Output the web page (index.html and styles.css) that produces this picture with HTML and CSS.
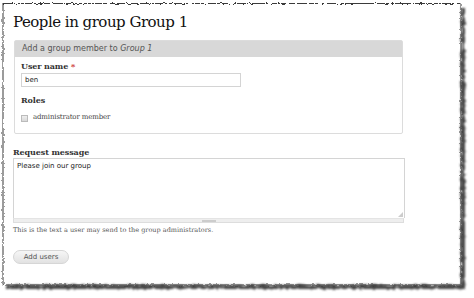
FILE: index.html
```html
<!DOCTYPE html>
<html>
<head>
<meta charset="utf-8">
<link rel="stylesheet" href="styles.css">
</head>
<body>
<div class="page">
  <div class="content">
    <h1 class="title">People in group Group 1</h1>
    <div class="fieldset">
      <div class="legend">Add a group member to <em>Group 1</em></div>
      <div class="fs-body">
        <div class="item">
          <label class="lbl">User name <span class="req">*</span></label>
          <div class="input">ben</div>
        </div>
        <div class="item roles">
          <div class="lbl">Roles</div>
          <div class="check-row"><span class="checkbox"></span><span class="check-label">administrator member</span></div>
        </div>
      </div>
    </div>
    <div class="item msg">
      <label class="lbl">Request message</label>
      <div class="textarea">Please join our group<span class="resize"></span></div>
      <div class="grippie"><span class="grip"></span></div>
      <div class="desc">This is the text a user may send to the group administrators.</div>
    </div>
    <div class="button">Add users</div>
  </div>
  <svg class="frame" viewBox="0 0 474 298" width="474" height="298">
    <defs>
      <filter id="rough" x="-5%" y="-5%" width="110%" height="110%">
        <feTurbulence type="fractalNoise" baseFrequency="0.35" numOctaves="2" seed="4" result="n"/>
        <feDisplacementMap in="SourceGraphic" in2="n" scale="3.5" xChannelSelector="R" yChannelSelector="G"/>
      </filter>
      <filter id="shadow" x="-5%" y="-5%" width="110%" height="110%">
        <feTurbulence type="fractalNoise" baseFrequency="0.3" numOctaves="2" seed="7" result="n"/>
        <feDisplacementMap in="SourceGraphic" in2="n" scale="4" xChannelSelector="R" yChannelSelector="G" result="d"/>
        <feGaussianBlur in="d" stdDeviation="1"/>
      </filter>
    </defs>
    <path d="M6 287 H463 V8" fill="none" stroke="#444" stroke-width="4" filter="url(#shadow)"/>
    <rect x="3" y="3.5" width="458" height="281.5" fill="none" stroke="#3a3a3a" stroke-width="1" filter="url(#rough)"/>
  </svg>
</div>
</body>
</html>
```

FILE: styles.css
```css
html, body {
  margin: 0;
  padding: 0;
  background: #fff;
}
.page {
  position: relative;
  width: 474px;
  height: 298px;
  overflow: hidden;
}
.frame {
  position: absolute;
  left: 0;
  top: 0;
  pointer-events: none;
}
.content {
  padding: 10px 0 0 13px;
  width: 391px;
  font-family: "DejaVu Serif", serif;
  color: #333;
}
.title {
  margin: 0;
  font-family: "DejaVu Serif", serif;
  font-weight: normal;
  font-size: 15px;
  line-height: 24px;
  color: #111;
  letter-spacing: -0.5px;
}
.fieldset {
  margin: 6px 0 0 1px;
  width: 387px;
  border: 1px solid #dcdcdc;
  border-radius: 2px;
}
.legend {
  height: 16px;
  line-height: 16px;
  background: #d8d8d8;
  padding-left: 7px;
  font-family: "DejaVu Sans", sans-serif;
  font-size: 8px;
  color: #555;
}
.fs-body {
  padding: 3px 6px 11px 6px;
}
.lbl {
  display: block;
  font-family: "DejaVu Serif", serif;
  font-weight: bold;
  font-size: 8px;
  letter-spacing: -0.1px;
  line-height: 12px;
  color: #333;
}
.req {
  color: #c33;
}
.input {
  margin-top: 1px;
  width: 215px;
  height: 12px;
  border: 1px solid #d4d4d4;
  padding-left: 3px;
  font-family: "DejaVu Sans", sans-serif;
  font-size: 7px;
  line-height: 12px;
  color: #222;
}
.roles {
  margin-top: 7px;
}
.check-row {
  display: flex;
  align-items: center;
  gap: 5px;
  height: 10px;
  margin-top: 6px;
}
.checkbox {
  width: 5px;
  height: 5px;
  border: 1px solid #bbb;
  background: linear-gradient(#eee, #d8d8d8);
  margin-top: 2px;
}
.check-label {
  font-family: "DejaVu Serif", serif;
  font-size: 7px;
  letter-spacing: -0.15px;
  color: #444;
}
.msg {
  margin-top: 12px;
}
.textarea {
  position: relative;
  width: 385px;
  height: 56px;
  border: 1px solid #d4d4d4;
  border-bottom: none;
  padding: 3px 2px 0 3px;
  font-family: "DejaVu Sans", sans-serif;
  font-size: 7px;
  line-height: 9px;
  color: #222;
}
.resize {
  position: absolute;
  right: 1px;
  bottom: 1px;
  width: 0;
  height: 0;
  border-left: 5px solid transparent;
  border-bottom: 5px solid #ccc;
}
.grippie {
  width: 389px;
  height: 3px;
  background: #eee;
  border: 1px solid #ddd;
  border-top: 1px solid #e4e4e4;
  display: flex;
  justify-content: center;
  align-items: center;
}
.grip {
  width: 14px;
  height: 2px;
  background: #ccc;
}
.desc {
  margin-top: 2px;
  font-family: "DejaVu Serif", serif;
  font-size: 6.5px;
  line-height: 10px;
  color: #555;
}
.button {
  margin-top: 15px;
  width: 56px;
  height: 14px;
  border: 1px solid #d6d6d6;
  border-radius: 8px;
  background: linear-gradient(#f6f6f6, #e2e2e2);
  font-family: "DejaVu Sans", sans-serif;
  font-size: 7px;
  line-height: 12px;
  text-align: center;
  color: #555;
  box-sizing: border-box;
}
```
